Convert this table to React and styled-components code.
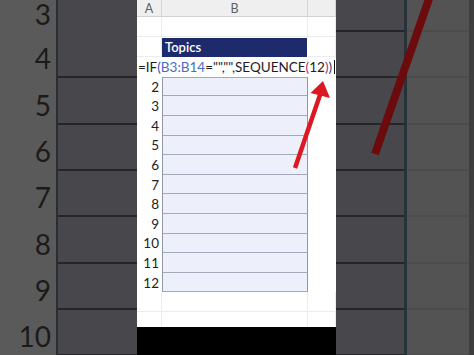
import React from "react";
import styled, { createGlobalStyle } from "styled-components";

const Global = createGlobalStyle`
  html, body { margin: 0; padding: 0; background: #000; }
  body { font-family: Lato, "Liberation Sans", sans-serif; }
`;

const Frame = styled.div`
  width: 474px;
  height: 355px;
  display: flex;
  overflow: hidden;
  background: #000;
`;

/* ---------- blurred background side panels ---------- */
const SidePanel = styled.div`
  position: relative;
  width: ${(p) => p.$w}px;
  flex: none;
  display: flex;
  flex-direction: column;
  overflow: hidden;
`;

const BgRow = styled.div`
  display: grid;
  grid-template-columns: ${(p) => p.$cols};
  height: ${(p) => (p.$first ? 32 : 46.33)}px;
  flex: none;
`;

const BigNum = styled.div`
  background: #5a5a5a;
  display: flex;
  justify-content: flex-end;
  align-items: flex-end;
  padding: 0 5px ${(p) => (p.$first ? 8 : 6)}px 0;
  font-family: Lato, "Liberation Sans", sans-serif;
  font-size: 28px;
  line-height: 28px;
  color: #1b1b1b;
`;

const VLine = styled.div`
  background: ${(p) => p.$c || "#282c33"};
`;

const BgCell = styled.div`
  box-sizing: border-box;
  background: ${(p) => p.$bg || "#48484c"};
  border-bottom: 2px solid ${(p) => p.$line || "#25252a"};
`;

const Overlay = styled.svg`
  position: absolute;
  left: 0;
  top: 0;
  pointer-events: none;
`;

/* ---------- center spreadsheet ---------- */
const Center = styled.div`
  position: relative;
  width: 199px;
  flex: none;
  display: flex;
  flex-direction: column;
  background: #000;
`;

const Sheet = styled.div`
  height: 327px;
  background: #fff;
  overflow: hidden;
  display: flex;
  flex-direction: column;
  font-family: Lato, "Liberation Sans", sans-serif;
`;

const Row = styled.div`
  display: grid;
  grid-template-columns: 25px 146px 1fr;
  height: ${(p) => p.$h || 19.6}px;
  flex: none;
`;

const HeadCell = styled.div`
  box-sizing: border-box;
  background: #efefef;
  border-bottom: 1px solid #d2d2d2;
  border-right: 1px solid #d6d6d6;
  display: flex;
  align-items: center;
  justify-content: center;
  font-size: 12.5px;
  color: #5f5f5f;
`;

const GridCell = styled.div`
  box-sizing: border-box;
  border-right: 1px solid #ececec;
  border-bottom: 1px solid #ececec;
`;

const TitleCell = styled.div`
  box-sizing: border-box;
  background: #1d2b6c;
  color: #fff;
  font-size: 13px;
  font-weight: 600;
  display: flex;
  align-items: center;
  padding-left: 3px;
  margin: 1px 1px 0 0;
`;

const FormulaCell = styled.div`
  grid-column: 1 / -1;
  display: flex;
  align-items: center;
  padding-left: 1px;
  font-size: 13.5px;
  color: #1e1e1e;
  white-space: nowrap;
`;

const Tok = styled.span`
  color: ${(p) => p.$c};
`;

const Caret = styled.span`
  display: inline-block;
  width: 1px;
  height: 14px;
  background: #111;
  margin-left: 2px;
`;

const NumCell = styled.div`
  box-sizing: border-box;
  display: flex;
  align-items: center;
  justify-content: flex-end;
  padding-right: 3px;
  font-size: 13.5px;
  color: #222;
`;

const ListCell = styled.div`
  box-sizing: border-box;
  background: #edf0fa;
  border-left: 1px solid #8d96aa;
  border-right: 1px solid #8d96aa;
  border-bottom: 1px solid #a1a9ba;
  border-top: ${(p) => (p.$top ? "1px solid #a1a9ba" : "none")};
`;

const BlankCell = styled.div``;

const BlackFill = styled.div`
  flex: 1;
  background: #000;
`;

const bigNums = ["3", "4", "5", "6", "7", "8", "9", "10"];
const values = [2, 3, 4, 5, 6, 7, 8, 9, 10, 11, 12];

export default function App() {
  return (
    <>
      <Global />
      <Frame>
        <SidePanel $w={137}>
          {bigNums.map((n, i) => (
            <BgRow key={n} $first={i === 0} $cols="56px 2px 1fr">
              <BigNum $first={i === 0}>{n}</BigNum>
              <VLine />
              <BgCell />
            </BgRow>
          ))}
        </SidePanel>

        <Center>
          <Sheet>
            <Row $h={17}>
              <HeadCell>A</HeadCell>
              <HeadCell>B</HeadCell>
              <HeadCell />
            </Row>
            <Row $h={20}>
              <GridCell />
              <GridCell />
              <GridCell />
            </Row>
            <Row>
              <GridCell />
              <TitleCell>Topics</TitleCell>
              <GridCell />
            </Row>
            <Row $h={20.2}>
              <FormulaCell>
                <Tok $c="#1e1e1e">=IF</Tok>
                <Tok $c="#3d55a8">(</Tok>
                <Tok $c="#4a6cc8">B3:B14</Tok>
                <Tok $c="#1e1e1e">="","",SEQUENCE</Tok>
                <Tok $c="#a8306c">(</Tok>
                <Tok $c="#1e1e1e">12</Tok>
                <Tok $c="#a8306c">)</Tok>
                <Tok $c="#2a3a70">)</Tok>
                <Caret />
              </FormulaCell>
            </Row>
            {values.map((v, i) => (
              <Row key={v}>
                <NumCell>{v}</NumCell>
                <ListCell $top={i === 0} />
                <BlankCell />
              </Row>
            ))}
            <Row>
              <GridCell />
              <GridCell />
              <GridCell />
            </Row>
            <Row>
              <GridCell />
              <GridCell />
              <GridCell />
            </Row>
          </Sheet>
          <BlackFill />
          <Overlay width="199" height="355" viewBox="0 0 199 355">
            <line x1="158" y1="168" x2="184" y2="92" stroke="#dc1923" strokeWidth="4.5" />
            <polygon points="186,81 173.5,93 193,98" fill="#dc1923" />
          </Overlay>
        </Center>

        <SidePanel $w={138}>
          {bigNums.map((n, i) => (
            <BgRow key={n} $first={i === 0} $cols="68px 3px 62px 1fr">
              <BgCell />
              <VLine $c="#27313a" />
              <BgCell $bg="#535353" $line="#4c4c4c" />
              <BgCell $bg="#3e3e3e" $line="#3e3e3e" />
            </BgRow>
          ))}
          <Overlay width="138" height="355" viewBox="0 0 138 355">
            <line x1="39" y1="154" x2="94" y2="-4" stroke="#6c0b0e" strokeWidth="8" />
          </Overlay>
        </SidePanel>
      </Frame>
    </>
  );
}
